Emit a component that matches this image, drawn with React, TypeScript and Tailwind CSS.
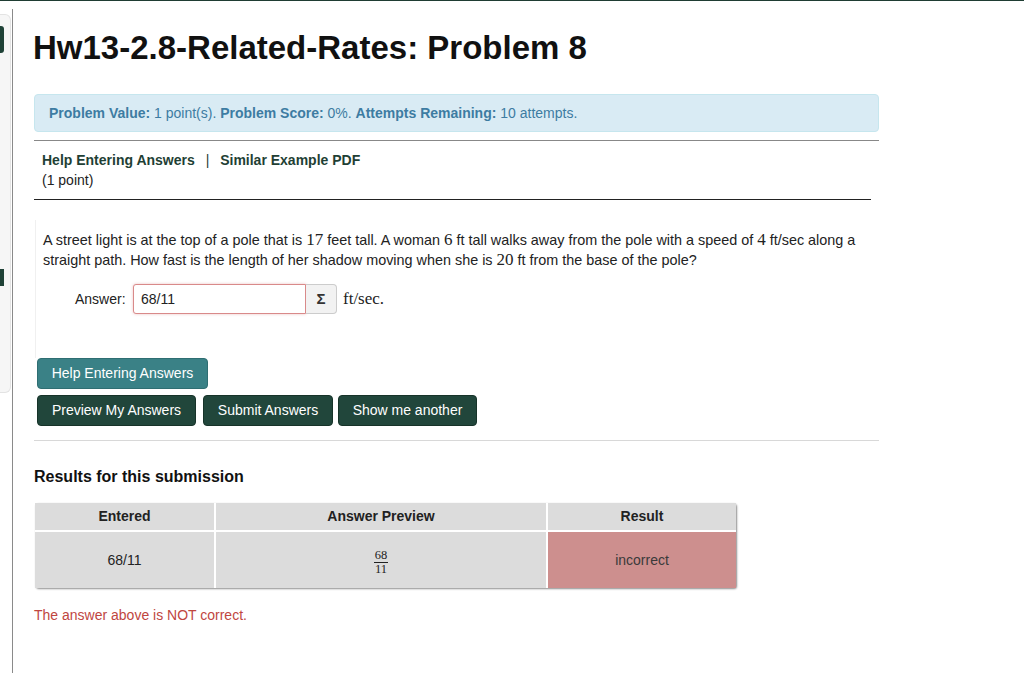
export default function App() {
  const serif = "font-['Liberation_Serif',serif]";
  return (
    <div className="relative h-[673px] w-[1024px] overflow-hidden bg-white font-['Liberation_Sans',Arial,sans-serif] text-[#222]">
      <div className="h-px w-full bg-[#1f3d33]" />
      <div className="flex">
        {/* left rail */}
        <div className="relative w-[13px] shrink-0">
          <div className="mt-[13px] flex h-[379px] w-[11px] flex-col rounded-r-[6px] border border-l-0 border-[#e3e3e3] bg-[#f6f6f6]">
            <div className="mt-[11px] h-[27px] w-[4px] rounded-r-[3px] bg-[#1f4237]" />
            <div className="mt-[216px] h-[17px] w-[4px] bg-[#1f4237]" />
          </div>
          <div className="absolute right-0 top-[8px] h-[665px] w-px bg-[#8a8a8a]" />
        </div>

        <main className="ml-[20px] w-[846px]">
          <h1 className="mt-[29px] text-[33px] font-bold leading-[36px] text-[#111]">
            Hw13-2.8-Related-Rates: Problem 8
          </h1>

          <div className="mt-[28px] ml-px flex h-[38px] items-center rounded-[4px] border border-[#c6e6ee] bg-[#d9ebf4] pl-[14px] text-[14px] text-[#3d7ca2]">
            <span className="font-bold">Problem Value:</span>&nbsp;1 point(s).&nbsp;
            <span className="font-bold">Problem Score:</span>&nbsp;0%.&nbsp;
            <span className="font-bold">Attempts Remaining:</span>&nbsp;10 attempts.
          </div>

          <div className="mt-[8px] ml-px h-px bg-[#888]" />

          <div className="ml-[9px] mt-[10px] text-[14px] font-bold leading-[18px] text-[#1f3f35]">
            Help Entering Answers <span className="mx-[7px] font-normal">|</span> Similar Example PDF
          </div>
          <div className="ml-[9px] mt-[3px] text-[14px] leading-[16px] text-[#222]">(1 point)</div>
          <div className="ml-px mt-[11px] h-px w-[837px] bg-[#222]" />

          <div className="ml-[2px] mt-[20px] border-l border-[#f0f0f0] pb-[44px] pl-[7px] pt-[10px]">
            <p className="text-[14.4px] leading-[20px] text-[#222]">
              A street light is at the top of a pole that is <span className={serif + " text-[17px]"}>17</span> feet tall. A woman{" "}
              <span className={serif + " text-[17px]"}>6</span> ft tall walks away from the pole with a speed of{" "}
              <span className={serif + " text-[17px]"}>4</span> ft/sec along a
              <br />
              straight path. How fast is the length of her shadow moving when she is{" "}
              <span className={serif + " text-[17px]"}>20</span> ft from the base of the pole?
            </p>
            <div className="mt-[14px] flex items-center">
              <span className="ml-[32px] w-[58px] text-[14px]">Answer:</span>
              <div className="flex h-[30px] w-[173px] items-center rounded-l-[3px] border border-[#d98a8a] bg-white pl-[7px] text-[14px] shadow-[0_0_3px_rgba(200,80,80,0.35)]">
                68/11
              </div>
              <div className="flex h-[30px] w-[31px] items-center justify-center rounded-r-[4px] border border-l-0 border-[#ccc] bg-[#f2f2f2] text-[15px] font-bold text-[#333]">
                Σ
              </div>
              <span className={serif + " ml-[6px] text-[17px]"}>ft/sec.</span>
            </div>
          </div>

          <div className="ml-[4px] flex flex-col gap-[6px]">
            <div>
              <button className="h-[31px] w-[171px] rounded-[4px] border border-[#2f6e72] bg-[#3a8186] text-[14px] text-white">
                Help Entering Answers
              </button>
            </div>
            <div className="flex">
              <button className="h-[31px] w-[159px] rounded-[4px] border border-[#173329] bg-[#21463b] text-[14px] text-white">
                Preview My Answers
              </button>
              <button className="ml-[7px] h-[31px] w-[130px] rounded-[4px] border border-[#173329] bg-[#21463b] text-[14px] text-white">
                Submit Answers
              </button>
              <button className="ml-[5px] h-[31px] w-[139px] rounded-[4px] border border-[#173329] bg-[#21463b] text-[14px] text-white">
                Show me another
              </button>
            </div>
          </div>

          <div className="ml-px mt-[14px] h-px bg-[#d8d8d8]" />

          <h2 className="ml-px mt-[27px] text-[16px] font-bold leading-[18px] text-[#111]">Results for this submission</h2>

          <div className="ml-[2px] mt-[17px] w-[701px] rounded-[3px] shadow-[1px_1px_2px_rgba(0,0,0,0.45)]">
            <table className="w-full border-collapse text-[14px] text-[#222]">
              <thead>
                <tr className="h-[28px] bg-[#dcdcdc]">
                  <th className="w-[180px] border-b-2 border-r-2 border-white font-bold">Entered</th>
                  <th className="w-[332px] border-b-2 border-r-2 border-white font-bold">Answer Preview</th>
                  <th className="border-b-2 border-white font-bold">Result</th>
                </tr>
              </thead>
              <tbody>
                <tr className="h-[57px]">
                  <td className="border-r-2 border-white bg-[#dcdcdc] text-center text-[14px]">68/11</td>
                  <td className="border-r-2 border-white bg-[#dcdcdc] text-center">
                    <div className={serif + " inline-flex flex-col items-center text-[12.5px] leading-[13px]"}>
                      <span className="border-b border-[#222] px-px">68</span>
                      <span>11</span>
                    </div>
                  </td>
                  <td className="bg-[#cd8f8e] text-center text-[14px] text-[#3a3a3a]">incorrect</td>
                </tr>
              </tbody>
            </table>
          </div>

          <p className="ml-px mt-[17px] text-[14px] text-[#c0463f]">The answer above is NOT correct.</p>
        </main>
      </div>
    </div>
  );
}
